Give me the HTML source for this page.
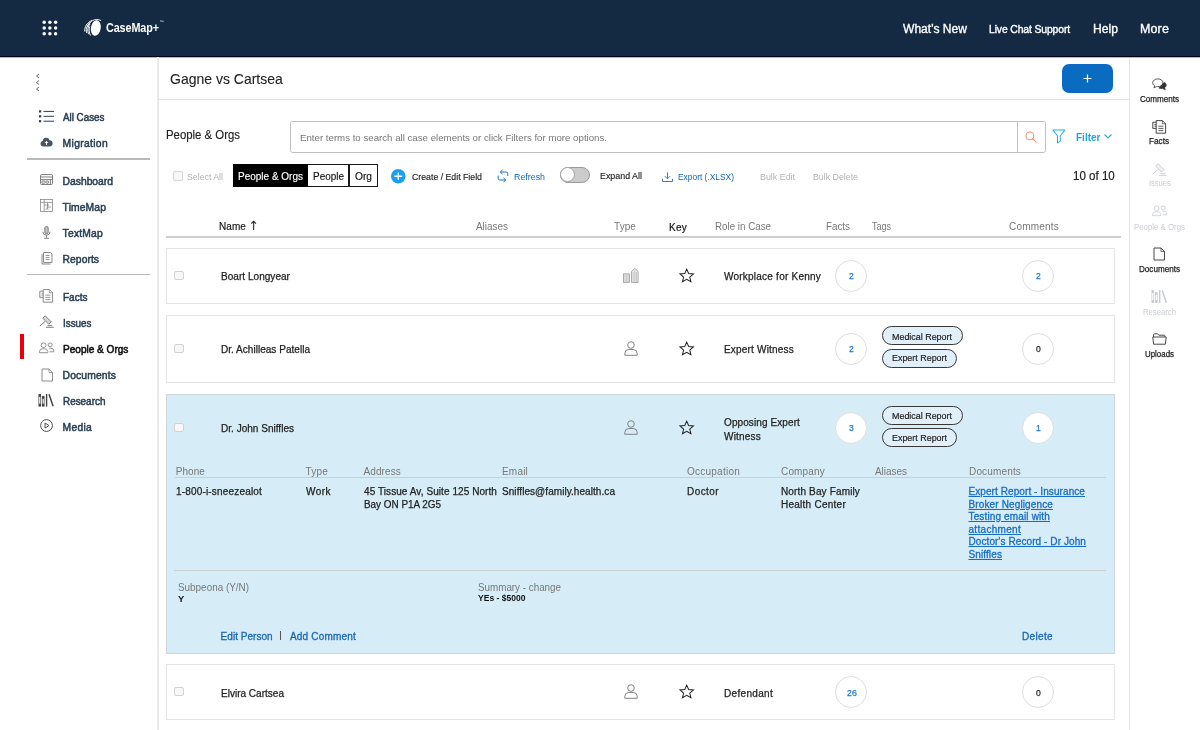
<!DOCTYPE html>
<html lang="en"><head><meta charset="utf-8"><title>CaseMap+ - People &amp; Orgs</title>
<style>
*{box-sizing:border-box;margin:0;padding:0}
html,body{width:1200px;height:730px;overflow:hidden;background:#fff}
body{font-family:"Liberation Sans",sans-serif;color:#222}
#app{position:relative;width:1200px;height:730px;overflow:hidden;will-change:transform}
.t{position:absolute;white-space:nowrap;display:block;transform-origin:0 50%}
.a{position:absolute;display:block}
.u{text-decoration:underline}
svg{position:absolute;overflow:visible}
.row{position:absolute;left:165.5px;width:949.3px;border:1.7px solid #e3e5e7;background:#fff}
.circ{position:absolute;width:32px;height:32px;border-radius:50%;border:1.4px solid #dedede;background:#fff}
.pill{position:absolute;height:18.5px;border:1.8px solid #383838;border-radius:10px;background:#e1effb}
.cb{position:absolute;width:9.5px;height:9.5px;border:1px solid #d2d2d2;border-radius:2px;background:#f7f7f7}
.hl{position:absolute;height:1px;background:#c9c9c9}

</style></head>
<body>
<div id="app">
<!-- top bar -->
<div class="a" style="left:0;top:0;width:1200px;height:55.7px;background:#142a43"></div>
<div class="a" style="left:0;top:55.6px;width:1200px;height:1.3px;background:#01031f"></div>
<div class="a" style="left:0;top:56.9px;width:1200px;height:1.3px;background:linear-gradient(rgba(50,66,96,.75),rgba(120,135,160,0))"></div>
<svg style="left:42px;top:20px" width="16" height="16" viewBox="0 0 16 16" fill="#fff"><circle cx="2.2" cy="2.3" r="1.75"/><circle cx="7.9" cy="2.3" r="1.75"/><circle cx="13.6" cy="2.3" r="1.75"/><circle cx="2.2" cy="8.0" r="1.75"/><circle cx="7.9" cy="8.0" r="1.75"/><circle cx="13.6" cy="8.0" r="1.75"/><circle cx="2.2" cy="13.7" r="1.75"/><circle cx="7.9" cy="13.7" r="1.75"/><circle cx="13.6" cy="13.7" r="1.75"/></svg>
<!-- logo -->
<svg style="left:83px;top:17px" width="20" height="20" viewBox="0 0 20 20">
<ellipse cx="12.8" cy="11" rx="4.9" ry="7.8" fill="#fff" transform="rotate(9 12.8 11)"/>
<g stroke="#fff" fill="none" stroke-linecap="round">
<path d="M4.6 9.6C5.6 4.2 12.5 0.6 17.8 3.4" stroke-width="0.9"/>
<path d="M8.6 3.6C4 5.6 1.2 9.8 1.8 14.2" stroke-width="1"/>
<path d="M7.6 5.2C4.2 7.6 2.6 11.4 3.6 15.6" stroke-width="1"/>
<path d="M6.8 7.2C4.6 9.8 4.2 13.4 5.4 16.8" stroke-width="1"/>
<path d="M6.6 9.8C5.6 12.4 6 15.6 7.4 18.2" stroke-width="1"/>
</g>
</svg>

<!-- left sidebar -->
<div class="a" style="left:157.3px;top:57px;width:1.7px;height:673px;background:#e8eaeb"></div>
<svg style="left:34.5px;top:73px" width="5" height="19" viewBox="0 0 5 19" fill="none" stroke="#444" stroke-width="0.8">
<path d="M4 1L1.5 3L4 5M4 7.5L1.5 9.5L4 11.5M4 14L1.5 16L4 18"/></svg>
<div class="a" style="left:27px;top:158.4px;width:123px;height:1.5px;background:#bababa"></div>
<div class="a" style="left:27px;top:273.6px;width:123px;height:1.5px;background:#bababa"></div>
<div class="a" style="left:20px;top:333.5px;width:3.5px;height:25px;background:#e8000d"></div>
<!-- sidebar icons -->
<svg style="left:39px;top:110px" width="15" height="13" viewBox="0 0 15 13" fill="#2d3e50">
<rect x="0" y="0.3" width="2.2" height="2.2"/><rect x="0" y="5.2" width="2.2" height="2.2"/><rect x="0" y="10.1" width="2.2" height="2.2"/>
<rect x="4.5" y="0.9" width="10.5" height="1"/><rect x="4.5" y="5.8" width="10.5" height="1"/><rect x="4.5" y="10.7" width="10.5" height="1"/></svg>
<svg style="left:40px;top:137px" width="13" height="10" viewBox="0 0 13 10">
<path d="M3 9.5A2.8 2.8 0 0 1 2.6 4A3.6 3.6 0 0 1 9.6 3.2A3.2 3.2 0 0 1 10.2 9.5Z" fill="#4a5560"/>
<path d="M6.5 8V4.6M4.9 6L6.5 4.4L8.1 6" stroke="#fff" stroke-width="1" fill="none"/></svg>
<!-- dashboard -->
<svg style="left:40px;top:174.3px" width="13" height="11" viewBox="0 0 13 11" fill="none" stroke="#6a6a6a" stroke-width="0.85">
<rect x="0.5" y="0.5" width="12" height="10" rx="1.2"/><path d="M0.5 3H12.5M0.5 5.6H12.5"/><rect x="1.8" y="7" width="3.2" height="2.2" rx="0.6"/><rect x="6" y="7" width="2.6" height="2.2" rx="0.6"/><path d="M10.4 5.6V10.5"/></svg>
<!-- timemap -->
<svg style="left:40px;top:199.4px" width="13" height="13" viewBox="0 0 13 13" fill="none" stroke="#808080" stroke-width="0.75">
<rect x="0.5" y="0.5" width="12" height="12"/><path d="M0.5 3.4H12.5M4.2 0.5V12.5M4.2 6H9M6.5 8H11M5.5 10H8.5M7.6 3.4V10"/></svg>
<!-- textmap (mic) -->
<svg style="left:42px;top:225.5px" width="9" height="13" viewBox="0 0 9 14" preserveAspectRatio="none" fill="none" stroke="#6f6f6f" stroke-width="0.9"><rect x="2.8" y="0.5" width="3.4" height="7.8" rx="1.7" fill="#c4c4c4"/><path d="M0.9 6.2A3.6 3.6 0 0 0 8.1 6.2M4.5 10V12.8M2 13.2H7"/></svg>
<!-- reports -->
<svg style="left:41px;top:251px" width="12" height="14" viewBox="0 0 12 14" fill="none" stroke="#7d7d7d" stroke-width="0.9">
<path d="M2.5 1.5H9.5L11 3V11.5H2.5Z"/><path d="M1 3V13H9.5"/><path d="M4.5 4.5H8.5M4.5 6.5H8.5M4.5 8.5H8.5" stroke-width="0.8"/></svg>
<!-- facts -->
<svg style="left:39px;top:289px" width="15" height="14" viewBox="0 0 15 14" fill="none" stroke="#7d7d7d" stroke-width="0.9">
<path d="M4.2 0.6H10.4L13.6 3.8V13.2H4.2Z"/><path d="M10.4 0.6V3.8H13.6" stroke-width="0.7"/><path d="M6.4 6.2H11.4M6.4 8.4H11.4M6.4 10.6H11.4" stroke-width="0.8"/><path d="M4.2 2.2H0.8V8.4H4.2" /><path d="M2.4 4.4H4.2M2.4 6.2H4.2" stroke-width="0.7"/></svg>
<!-- issues (gavel) -->
<svg style="left:39px;top:315px" width="15" height="13" viewBox="0 0 15 13" fill="none" stroke="#6f6f6f" stroke-width="0.9"><path d="M6.2 0.8L12.2 6.8L9.8 9.2L3.8 3.2Z" fill="#d8d8d8"/><path d="M6 6.4L0.8 11.2"/><path d="M7 12.3H14.6M8.4 10.6H13.2"/></svg>
<!-- people & orgs -->
<svg style="left:39px;top:342.4px" width="15.4" height="11.6" viewBox="0 0 16 13" preserveAspectRatio="none" fill="none" stroke="#7d7d7d" stroke-width="0.9">
<circle cx="4.8" cy="3.6" r="2.6"/><path d="M0.5 12V10.5A3.5 3.5 0 0 1 4 7.5H5.6A3.5 3.5 0 0 1 9.1 10.5V12Z"/><circle cx="11.6" cy="3.2" r="2.1"/><path d="M10.5 7H12.4A3 3 0 0 1 15.4 10V11H11"/></svg>
<!-- documents -->
<svg style="left:41px;top:368px" width="12" height="14" viewBox="0 0 12 14" fill="none" stroke="#7d7d7d" stroke-width="0.9">
<path d="M1 1H8L11.5 4.5V13H1Z"/><path d="M8 1V4.5H11.5" stroke-width="0.7"/></svg>
<!-- research (books) -->
<svg style="left:38.4px;top:393.6px" width="15.8" height="12.6" viewBox="0 0 16 13" preserveAspectRatio="none" fill="#444" stroke="none">
<rect x="0.5" y="0" width="2.6" height="13"/><rect x="4" y="2" width="2.6" height="11"/><rect x="8" y="0" width="1.4" height="13"/><path d="M10.5 0.6L11.9 0L16 12.4L14.6 13Z"/>
<rect x="1.2" y="3" width="1.2" height="7" fill="#fff"/><rect x="4.7" y="5" width="1.2" height="5" fill="#fff"/></svg>
<!-- media -->
<svg style="left:40.1px;top:419.4px" width="13.1" height="13.1" viewBox="0 0 14 14" fill="none" stroke="#444" stroke-width="1">
<circle cx="7" cy="7" r="6.3"/><path d="M5.4 4.3L9.6 7L5.4 9.7Z"/></svg>

<!-- right sidebar -->
<div class="a" style="left:1128.8px;top:58px;width:1.5px;height:672px;background:#e3e6e7"></div>
<!-- comments -->
<svg style="left:1152px;top:77.8px" width="15.3" height="13.5" viewBox="0 0 17 15" fill="none" stroke="#333" stroke-width="0.9">
<path d="M6.5 1C3.2 1 0.8 2.9 0.8 5.3C0.8 6.7 1.6 7.9 2.9 8.7L2.2 11L5 9.5C5.5 9.6 6 9.6 6.5 9.6C9.8 9.6 12.2 7.7 12.2 5.3S9.8 1 6.5 1Z"/>
<path d="M13.3 4.6C14.9 5.3 15.9 6.5 15.9 7.9C15.9 9 15.2 10 14.2 10.7L14.8 13.4L11.8 11.7C10.2 12 8.6 11.7 7.5 11" fill="#333" stroke-width="0.6"/></svg>
<!-- facts -->
<svg style="left:1152px;top:120px" width="15" height="14" viewBox="0 0 15 14" fill="none" stroke="#333" stroke-width="0.9">
<path d="M4.2 0.6H10.4L13.6 3.8V13.2H4.2Z"/><path d="M10.4 0.6V3.8H13.6" stroke-width="0.7"/><path d="M6.4 6.2H11.4M6.4 8.4H11.4M6.4 10.6H11.4" stroke-width="0.8"/><path d="M4.2 2.2H0.8V8.4H4.2" /><path d="M2.4 4.4H4.2M2.4 6.2H4.2" stroke-width="0.7"/></svg>
<!-- issues disabled -->
<svg style="left:1152px;top:163px" width="15" height="13" viewBox="0 0 15 13" fill="none" stroke="#c9cdd2" stroke-width="0.9"><path d="M6.2 0.8L12.2 6.8L9.8 9.2L3.8 3.2Z" fill="#eef0f2"/><path d="M6 6.4L0.8 11.2"/><path d="M7 12.3H14.6M8.4 10.6H13.2"/></svg>
<!-- people disabled -->
<svg style="left:1151.5px;top:205.4px" width="15.4" height="11.6" viewBox="0 0 16 13" preserveAspectRatio="none" fill="none" stroke="#c9cdd2" stroke-width="0.9">
<circle cx="4.8" cy="3.6" r="2.6"/><path d="M0.5 12V10.5A3.5 3.5 0 0 1 4 7.5H5.6A3.5 3.5 0 0 1 9.1 10.5V12Z"/><circle cx="11.6" cy="3.2" r="2.1"/><path d="M10.5 7H12.4A3 3 0 0 1 15.4 10V11H11"/></svg>
<!-- documents -->
<svg style="left:1153px;top:247px" width="12" height="14" viewBox="0 0 12 14" fill="none" stroke="#333" stroke-width="0.9">
<path d="M1 1H8L11.5 4.5V13H1Z"/><path d="M8 1V4.5H11.5" stroke-width="0.7"/></svg>
<!-- research disabled -->
<svg style="left:1151px;top:290px" width="16" height="13" viewBox="0 0 16 13" fill="#c9cdd2" stroke="none">
<rect x="0.5" y="0" width="2.6" height="13"/><rect x="4" y="2" width="2.6" height="11"/><rect x="8" y="0" width="1.4" height="13"/><path d="M10.5 0.6L11.9 0L16 12.4L14.6 13Z"/>
<rect x="1.2" y="3" width="1.2" height="7" fill="#fff"/><rect x="4.7" y="5" width="1.2" height="5" fill="#fff"/></svg>
<!-- uploads folder -->
<svg style="left:1152px;top:333px" width="15" height="12" viewBox="0 0 15 12" fill="none" stroke="#333" stroke-width="0.9">
<path d="M1.5 4V1.8A1 1 0 0 1 2.5 0.8H5.5L6.8 2.2H12A1 1 0 0 1 13 3.2V4"/><path d="M0.8 4H14.2L13.4 11.2H1.6Z"/></svg>

<!-- main header -->
<div class="a" style="left:158px;top:98.9px;width:971px;height:1.3px;background:#dde1ea"></div>
<div class="a" style="left:1062px;top:63.5px;width:51px;height:29.5px;background:#0a6cc0;border-radius:7px"></div>
<svg style="left:1083px;top:74px" width="9" height="9" viewBox="0 0 9 9" stroke="#fff" stroke-width="1.2"><path d="M4.5 0.5V8.5M0.5 4.5H8.5"/></svg>

<!-- search -->
<div class="a" style="left:290px;top:121.1px;width:755.8px;height:31.6px;border:1px solid #c0c0c0;border-radius:2.5px;background:#fff"></div>
<div class="a" style="left:1017px;top:121.1px;width:1px;height:31.6px;background:#c0c0c0"></div>
<svg style="left:1025px;top:130.6px" width="12.2" height="12.2" viewBox="0 0 13 13" fill="none" stroke="#f58a64" stroke-width="1.1"><circle cx="5.2" cy="5.2" r="4.2"/><path d="M8.3 8.3L12 12" stroke-linecap="round"/></svg>
<svg style="left:1052.2px;top:128.7px" width="13.8" height="15" viewBox="0 0 15 16" fill="none" stroke="#29abe2" stroke-width="1.1" stroke-linejoin="round"><path d="M1 1H14L9 7.5V13L6 15V7.5Z"/></svg>
<svg style="left:1104px;top:134px" width="8" height="5" viewBox="0 0 8 5" fill="none" stroke="#29abe2" stroke-width="1.1"><path d="M0.5 0.5L4 4L7.5 0.5"/></svg>

<!-- toolbar -->
<div class="cb" style="left:173px;top:171px;border-color:#d6d6d6"></div>
<div class="a" style="left:233px;top:164px;width:145px;height:23.2px;border:1px solid #1a1a1a;background:#fff"></div>
<div class="a" style="left:233px;top:164px;width:75px;height:23.2px;background:#000"></div>
<div class="a" style="left:348px;top:164px;width:1.5px;height:23.2px;background:#1a1a1a"></div>
<svg style="left:390.6px;top:169px" width="14.5" height="14.5" viewBox="0 0 15 15"><circle cx="7.5" cy="7.5" r="7.5" fill="#1c9ff0"/><path d="M7.5 3.5V11.5M3.5 7.5H11.5" stroke="#fff" stroke-width="1.3"/></svg>
<svg style="left:496.5px;top:169px" width="12" height="14" viewBox="0 0 12 14" fill="none" stroke="#1572c6" stroke-width="0.95"><path d="M10.8 7V4.6A1.6 1.6 0 0 0 9.2 3H3.4M5.6 0.8L3.2 3L5.6 5.2"/><path d="M1.2 6.6V9.4A1.6 1.6 0 0 0 2.8 11H8.6M6.4 8.8L8.8 11L6.4 13.2"/></svg>
<div class="a" style="left:560px;top:167px;width:29.5px;height:15.6px;border-radius:8px;background:#cbcbcb;border:1px solid #9a9a9a"></div>
<div class="a" style="left:560.3px;top:167.3px;width:15px;height:15px;border-radius:50%;background:#fff;border:1px solid #a0a0a0"></div>
<svg style="left:662px;top:172.4px" width="11" height="10" viewBox="0 0 11 10" fill="none" stroke="#1572c6" stroke-width="0.9"><path d="M5.5 0.3V6.6M2.9 4.2L5.5 6.8L8.1 4.2M0.5 6.8V9.5H10.5V6.8"/></svg>

<!-- table header line -->
<div class="a" style="left:165.8px;top:236px;width:955.7px;height:1.5px;background:#cfcecd"></div>

<!-- rows -->
<div class="row" style="top:248.3px;height:55.5px"></div>
<div class="row" style="top:314.7px;height:68.7px"></div>
<div class="row" style="top:393.7px;height:260.3px;background:#d6edf8;border-color:#cdd8dd"></div>
<div class="row" style="top:664.4px;height:55.9px"></div>
<div class="cb" style="left:174px;top:270.6px"></div>
<div class="cb" style="left:174px;top:343.6px"></div>
<div class="cb" style="left:174px;top:422.6px"></div>
<div class="cb" style="left:174px;top:686.6px"></div>

<!-- type icons -->
<svg style="left:623px;top:268px" width="16" height="15" viewBox="0 0 16 15" fill="#ececec" stroke="#8c8c8c" stroke-width="0.7">
<rect x="0.5" y="5.9" width="6.1" height="8.6"/><path d="M8.5 14.5V3.4L11.8 0.4L15.1 3.4V14.5Z"/><path d="M2.1 6.5V14M3.6 6.5V14M5.1 6.5V14M10.2 4V14M11.8 2.5V14M13.4 4V14" stroke-width="0.45" stroke="#9a9a9a"/></svg>
<svg style="left:624px;top:341px" width="14" height="15" viewBox="0 0 14 15" fill="none" stroke="#777" stroke-width="0.9"><circle cx="7" cy="4" r="3.3"/><path d="M0.8 14.3V12.5A4 4 0 0 1 4.8 8.5H9.2A4 4 0 0 1 13.2 12.5V14.3Z"/></svg>
<svg style="left:624px;top:420px" width="14" height="15" viewBox="0 0 14 15" fill="none" stroke="#777" stroke-width="0.9"><circle cx="7" cy="4" r="3.3"/><path d="M0.8 14.3V12.5A4 4 0 0 1 4.8 8.5H9.2A4 4 0 0 1 13.2 12.5V14.3Z"/></svg>
<svg style="left:624px;top:684px" width="14" height="15" viewBox="0 0 14 15" fill="none" stroke="#777" stroke-width="0.9"><circle cx="7" cy="4" r="3.3"/><path d="M0.8 14.3V12.5A4 4 0 0 1 4.8 8.5H9.2A4 4 0 0 1 13.2 12.5V14.3Z"/></svg>
<!-- stars -->
<svg style="left:679px;top:268.3px" width="15.4" height="14.4" viewBox="0 0 16 15" fill="none" stroke="#222" stroke-width="1.05"><path d="M8 1.2L10 5.8L15 6.2L11.2 9.5L12.4 14.3L8 11.7L3.6 14.3L4.8 9.5L1 6.2L6 5.8Z"/></svg>
<svg style="left:679px;top:341.3px" width="15.4" height="14.4" viewBox="0 0 16 15" fill="none" stroke="#222" stroke-width="1.05"><path d="M8 1.2L10 5.8L15 6.2L11.2 9.5L12.4 14.3L8 11.7L3.6 14.3L4.8 9.5L1 6.2L6 5.8Z"/></svg>
<svg style="left:679px;top:420.3px" width="15.4" height="14.4" viewBox="0 0 16 15" fill="none" stroke="#222" stroke-width="1.05"><path d="M8 1.2L10 5.8L15 6.2L11.2 9.5L12.4 14.3L8 11.7L3.6 14.3L4.8 9.5L1 6.2L6 5.8Z"/></svg>
<svg style="left:679px;top:684.3px" width="15.4" height="14.4" viewBox="0 0 16 15" fill="none" stroke="#222" stroke-width="1.05"><path d="M8 1.2L10 5.8L15 6.2L11.2 9.5L12.4 14.3L8 11.7L3.6 14.3L4.8 9.5L1 6.2L6 5.8Z"/></svg>
<!-- circles -->
<div class="circ" style="left:835.2px;top:260.0px"></div><div class="circ" style="left:1022.3px;top:260.0px"></div>
<div class="circ" style="left:835.2px;top:333.0px"></div><div class="circ" style="left:1022.3px;top:333.0px"></div>
<div class="circ" style="left:835.2px;top:412.0px"></div><div class="circ" style="left:1022.3px;top:412.0px"></div>
<div class="circ" style="left:835.2px;top:676.0px"></div><div class="circ" style="left:1022.3px;top:676.0px"></div>
<!-- pills -->
<div class="pill" style="left:882px;top:326.4px;width:81px;height:19px"></div>
<div class="pill" style="left:882px;top:349px;width:75px;height:18.8px"></div>
<div class="pill" style="left:882px;top:406px;width:81px"></div>
<div class="pill" style="left:882px;top:428.3px;width:75px;height:19px"></div>
<!-- expanded lines -->
<div class="hl" style="left:175px;top:477.3px;width:931px;height:1.2px;background:#c9cfd3"></div>
<div class="hl" style="left:173.5px;top:570.2px;width:932.5px;height:1.2px;background:#c9cfd3"></div>
<div class="a" style="left:280.3px;top:630.6px;width:1px;height:9.4px;background:#555"></div>

<span class="t" id="t0" style="left:105.6px;top:20.90px;font-size:12px;line-height:14.40px;font-weight:700;color:#fff;letter-spacing:-0.102px;transform:scaleX(0.9000);">CaseMap+</span>
<span class="t" id="t1" style="left:159.5px;top:20.20px;font-size:4px;line-height:4.80px;font-weight:400;color:#fff;">™</span>
<span class="t" id="t2" style="left:903px;top:22.10px;font-size:12.5px;line-height:15.00px;font-weight:400;color:#fff;transform:scaleX(0.9654);-webkit-text-stroke:0.35px;">What's New</span>
<span class="t" id="t3" style="left:989px;top:22.70px;font-size:11.5px;line-height:13.80px;font-weight:400;color:#fff;letter-spacing:-0.121px;transform:scaleX(0.9000);-webkit-text-stroke:0.4px;">Live Chat Support</span>
<span class="t" id="t4" style="left:1093px;top:22.10px;font-size:12.5px;line-height:15.00px;font-weight:400;color:#fff;transform:scaleX(0.9721);-webkit-text-stroke:0.35px;">Help</span>
<span class="t" id="t5" style="left:1140px;top:22.10px;font-size:12.5px;line-height:15.00px;font-weight:400;color:#fff;letter-spacing:0.129px;-webkit-text-stroke:0.35px;">More</span>
<span class="t" id="t6" style="left:62.6px;top:112.42px;font-size:10.3px;line-height:12.36px;font-weight:400;color:#293f53;transform:scaleX(0.9517);-webkit-text-stroke:0.5px;">All Cases</span>
<span class="t" id="t7" style="left:62.6px;top:138.42px;font-size:10.3px;line-height:12.36px;font-weight:400;color:#293f53;letter-spacing:0.338px;-webkit-text-stroke:0.5px;">Migration</span>
<span class="t" id="t8" style="left:62.6px;top:176.42px;font-size:10.3px;line-height:12.36px;font-weight:400;color:#293f53;-webkit-text-stroke:0.5px;">Dashboard</span>
<span class="t" id="t9" style="left:62.6px;top:202.42px;font-size:10.3px;line-height:12.36px;font-weight:400;color:#293f53;letter-spacing:0.124px;-webkit-text-stroke:0.5px;">TimeMap</span>
<span class="t" id="t10" style="left:62.6px;top:228.42px;font-size:10.3px;line-height:12.36px;font-weight:400;color:#293f53;letter-spacing:0.211px;-webkit-text-stroke:0.5px;">TextMap</span>
<span class="t" id="t11" style="left:62.6px;top:254.42px;font-size:10.3px;line-height:12.36px;font-weight:400;color:#293f53;letter-spacing:0.048px;-webkit-text-stroke:0.5px;">Reports</span>
<span class="t" id="t12" style="left:62.6px;top:292.42px;font-size:10.3px;line-height:12.36px;font-weight:400;color:#293f53;transform:scaleX(0.9687);-webkit-text-stroke:0.5px;">Facts</span>
<span class="t" id="t13" style="left:62.6px;top:318.42px;font-size:10.3px;line-height:12.36px;font-weight:400;color:#293f53;transform:scaleX(0.9541);-webkit-text-stroke:0.5px;">Issues</span>
<span class="t" id="t14" style="left:62.6px;top:344.42px;font-size:10.3px;line-height:12.36px;font-weight:400;color:#111;transform:scaleX(0.9766);-webkit-text-stroke:0.55px;">People &amp; Orgs</span>
<span class="t" id="t15" style="left:62.6px;top:370.42px;font-size:10.3px;line-height:12.36px;font-weight:400;color:#293f53;letter-spacing:0.147px;-webkit-text-stroke:0.5px;">Documents</span>
<span class="t" id="t16" style="left:62.6px;top:396.42px;font-size:10.3px;line-height:12.36px;font-weight:400;color:#293f53;transform:scaleX(0.9619);-webkit-text-stroke:0.5px;">Research</span>
<span class="t" id="t17" style="left:62.6px;top:422.42px;font-size:10.3px;line-height:12.36px;font-weight:400;color:#293f53;letter-spacing:0.271px;-webkit-text-stroke:0.5px;">Media</span>
<span class="t" id="t18" style="left:1140px;top:93.80px;font-size:8.5px;line-height:10.20px;font-weight:400;color:#222;transform:scaleX(0.9490);-webkit-text-stroke:0.25px;">Comments</span>
<span class="t" id="t19" style="left:1149px;top:136.40px;font-size:8.5px;line-height:10.20px;font-weight:400;color:#222;transform:scaleX(0.9624);-webkit-text-stroke:0.25px;">Facts</span>
<span class="t" id="t20" style="left:1148.6px;top:177.50px;font-size:8.5px;line-height:10.20px;font-weight:400;color:#c9cdd2;letter-spacing:-0.078px;transform:scaleX(0.9000);">Issues</span>
<span class="t" id="t21" style="left:1134px;top:221.80px;font-size:8.5px;line-height:10.20px;font-weight:400;color:#c9cdd2;transform:scaleX(0.9226);">People &amp; Orgs</span>
<span class="t" id="t22" style="left:1139px;top:263.50px;font-size:8.5px;line-height:10.20px;font-weight:400;color:#222;transform:scaleX(0.9535);-webkit-text-stroke:0.25px;">Documents</span>
<span class="t" id="t23" style="left:1143px;top:306.80px;font-size:8.5px;line-height:10.20px;font-weight:400;color:#c9cdd2;transform:scaleX(0.9068);">Research</span>
<span class="t" id="t24" style="left:1145px;top:349.10px;font-size:8.5px;line-height:10.20px;font-weight:400;color:#222;transform:scaleX(0.9299);-webkit-text-stroke:0.25px;">Uploads</span>
<span class="t" id="t25" style="left:170px;top:70.10px;font-size:15px;line-height:18.00px;font-weight:400;color:#222;transform:scaleX(0.9330);-webkit-text-stroke:0.1px;">Gagne vs Cartsea</span>
<span class="t" id="t26" style="left:166px;top:127.90px;font-size:12px;line-height:14.40px;font-weight:400;color:#222;transform:scaleX(0.9481);-webkit-text-stroke:0.15px;">People &amp; Orgs</span>
<span class="t" id="t27" style="left:300px;top:131.72px;font-size:9.8px;line-height:11.76px;font-weight:400;color:#777;transform:scaleX(0.9875);">Enter terms to search all case elements or click Filters for more options.</span>
<span class="t" id="t28" style="left:1075.5px;top:131.30px;font-size:10.5px;line-height:12.60px;font-weight:700;color:#1aa3e8;transform:scaleX(0.9544);">Filter</span>
<span class="t" id="t29" style="left:187px;top:172.08px;font-size:9.2px;line-height:11.04px;font-weight:400;color:#b0b0b0;transform:scaleX(0.9525);">Select All</span>
<span class="t" id="t30" style="left:238px;top:171.26px;font-size:10.4px;line-height:12.48px;font-weight:400;color:#fff;transform:scaleX(0.9618);-webkit-text-stroke:0.15px;">People &amp; Orgs</span>
<span class="t" id="t31" style="left:313px;top:171.26px;font-size:10.4px;line-height:12.48px;font-weight:400;color:#111;transform:scaleX(0.9580);-webkit-text-stroke:0.15px;">People</span>
<span class="t" id="t32" style="left:355px;top:171.26px;font-size:10.4px;line-height:12.48px;font-weight:400;color:#111;transform:scaleX(0.9811);-webkit-text-stroke:0.15px;">Org</span>
<span class="t" id="t33" style="left:412px;top:172.08px;font-size:9.2px;line-height:11.04px;font-weight:400;color:#222;transform:scaleX(0.9518);-webkit-text-stroke:0.15px;">Create / Edit Field</span>
<span class="t" id="t34" style="left:514px;top:172.08px;font-size:9.2px;line-height:11.04px;font-weight:400;color:#1167b8;transform:scaleX(0.9636);">Refresh</span>
<span class="t" id="t35" style="left:600px;top:170.58px;font-size:9.2px;line-height:11.04px;font-weight:400;color:#222;transform:scaleX(0.9673);-webkit-text-stroke:0.15px;">Expand All</span>
<span class="t" id="t36" style="left:678px;top:172.08px;font-size:9.2px;line-height:11.04px;font-weight:400;color:#1167b8;transform:scaleX(0.9138);">Export (.XLSX)</span>
<span class="t" id="t37" style="left:760px;top:172.08px;font-size:9.2px;line-height:11.04px;font-weight:400;color:#b2b2b2;transform:scaleX(0.9651);">Bulk Edit</span>
<span class="t" id="t38" style="left:813px;top:172.08px;font-size:9.2px;line-height:11.04px;font-weight:400;color:#b2b2b2;transform:scaleX(0.9578);">Bulk Delete</span>
<span class="t" id="t39" style="left:1072.6px;top:168.90px;font-size:12.5px;line-height:15.00px;font-weight:400;color:#222;transform:scaleX(0.9250);-webkit-text-stroke:0.2px;">10 of 10</span>
<span class="t" id="t40" style="left:219px;top:220.90px;font-size:10px;line-height:12.00px;font-weight:400;color:#222;letter-spacing:0.078px;-webkit-text-stroke:0.2px;">Name</span>
<span class="t" id="t41" style="left:248.2px;top:218.20px;font-size:12.5px;line-height:15.00px;font-weight:400;color:#222;font-family:'DejaVu Sans',sans-serif;">↑</span>
<span class="t" id="t42" style="left:476px;top:221.20px;font-size:10px;line-height:12.00px;font-weight:400;color:#777;transform:scaleX(0.9922);">Aliases</span>
<span class="t" id="t43" style="left:614px;top:221.20px;font-size:10px;line-height:12.00px;font-weight:400;color:#777;letter-spacing:0.078px;">Type</span>
<span class="t" id="t44" style="left:669px;top:222.00px;font-size:10px;line-height:12.00px;font-weight:400;color:#111;letter-spacing:0.255px;-webkit-text-stroke:0.2px;">Key</span>
<span class="t" id="t45" style="left:715px;top:221.20px;font-size:10px;line-height:12.00px;font-weight:400;color:#777;transform:scaleX(0.9779);">Role in Case</span>
<span class="t" id="t46" style="left:826px;top:221.20px;font-size:10px;line-height:12.00px;font-weight:400;color:#777;transform:scaleX(0.9815);">Facts</span>
<span class="t" id="t47" style="left:872px;top:221.20px;font-size:10px;line-height:12.00px;font-weight:400;color:#777;transform:scaleX(0.9000);">Tags</span>
<span class="t" id="t48" style="left:1009px;top:221.20px;font-size:10px;line-height:12.00px;font-weight:400;color:#777;letter-spacing:0.205px;">Comments</span>
<span class="t" id="t49" style="left:221px;top:270.60px;font-size:10px;line-height:12.00px;font-weight:400;color:#222;letter-spacing:0.044px;-webkit-text-stroke:0.25px;">Boart Longyear</span>
<span class="t" id="t50" style="left:724px;top:270.60px;font-size:10px;line-height:12.00px;font-weight:400;color:#222;letter-spacing:0.229px;-webkit-text-stroke:0.25px;">Workplace for Kenny</span>
<span class="t" id="t51" style="left:848.7px;top:271.20px;font-size:9px;line-height:10.80px;font-weight:400;color:#1b75d0;transform:scaleX(0.9570);-webkit-text-stroke:0.25px;">2</span>
<span class="t" id="t52" style="left:1035.7px;top:271.20px;font-size:9px;line-height:10.80px;font-weight:400;color:#1b75d0;transform:scaleX(0.9570);-webkit-text-stroke:0.25px;">2</span>
<span class="t" id="t53" style="left:221px;top:343.60px;font-size:10px;line-height:12.00px;font-weight:400;color:#222;letter-spacing:0.029px;-webkit-text-stroke:0.25px;">Dr. Achilleas Patella</span>
<span class="t" id="t54" style="left:724px;top:343.60px;font-size:10px;line-height:12.00px;font-weight:400;color:#222;letter-spacing:0.196px;-webkit-text-stroke:0.25px;">Expert Witness</span>
<span class="t" id="t55" style="left:848.7px;top:344.20px;font-size:9px;line-height:10.80px;font-weight:400;color:#1b75d0;transform:scaleX(0.9570);-webkit-text-stroke:0.25px;">2</span>
<span class="t" id="t56" style="left:1035.7px;top:344.20px;font-size:9px;line-height:10.80px;font-weight:400;color:#222;transform:scaleX(0.9570);-webkit-text-stroke:0.25px;">0</span>
<span class="t" id="t57" style="left:892px;top:330.80px;font-size:9.5px;line-height:11.40px;font-weight:400;color:#222;transform:scaleX(0.9391);-webkit-text-stroke:0.2px;">Medical Report</span>
<span class="t" id="t58" style="left:892px;top:351.90px;font-size:9.5px;line-height:11.40px;font-weight:400;color:#222;transform:scaleX(0.9382);-webkit-text-stroke:0.2px;">Expert Report</span>
<span class="t" id="t59" style="left:221px;top:422.60px;font-size:10px;line-height:12.00px;font-weight:400;color:#222;letter-spacing:0.021px;-webkit-text-stroke:0.25px;">Dr. John Sniffles</span>
<span class="t" id="t60" style="left:724px;top:416.60px;font-size:10px;line-height:12.00px;font-weight:400;color:#222;letter-spacing:0.100px;-webkit-text-stroke:0.25px;">Opposing Expert</span>
<span class="t" id="t61" style="left:724px;top:430.60px;font-size:10px;line-height:12.00px;font-weight:400;color:#222;letter-spacing:0.205px;-webkit-text-stroke:0.25px;">Witness</span>
<span class="t" id="t62" style="left:848.7px;top:423.20px;font-size:9px;line-height:10.80px;font-weight:400;color:#1b75d0;transform:scaleX(0.9570);-webkit-text-stroke:0.25px;">3</span>
<span class="t" id="t63" style="left:1035.7px;top:423.20px;font-size:9px;line-height:10.80px;font-weight:400;color:#1b75d0;transform:scaleX(0.9570);-webkit-text-stroke:0.25px;">1</span>
<span class="t" id="t64" style="left:892px;top:410.40px;font-size:9.5px;line-height:11.40px;font-weight:400;color:#222;transform:scaleX(0.9391);-webkit-text-stroke:0.2px;">Medical Report</span>
<span class="t" id="t65" style="left:892px;top:432.40px;font-size:9.5px;line-height:11.40px;font-weight:400;color:#222;transform:scaleX(0.9382);-webkit-text-stroke:0.2px;">Expert Report</span>
<span class="t" id="t66" style="left:175.7px;top:465.60px;font-size:10px;line-height:12.00px;font-weight:400;color:#777;letter-spacing:0.076px;">Phone</span>
<span class="t" id="t67" style="left:305.5px;top:465.60px;font-size:10px;line-height:12.00px;font-weight:400;color:#777;letter-spacing:0.203px;">Type</span>
<span class="t" id="t68" style="left:363.4px;top:465.60px;font-size:10px;line-height:12.00px;font-weight:400;color:#777;letter-spacing:0.130px;">Address</span>
<span class="t" id="t69" style="left:502px;top:465.60px;font-size:10px;line-height:12.00px;font-weight:400;color:#777;letter-spacing:0.197px;">Email</span>
<span class="t" id="t70" style="left:687px;top:465.60px;font-size:10px;line-height:12.00px;font-weight:400;color:#777;letter-spacing:0.241px;">Occupation</span>
<span class="t" id="t71" style="left:781px;top:465.60px;font-size:10px;line-height:12.00px;font-weight:400;color:#777;letter-spacing:0.170px;">Company</span>
<span class="t" id="t72" style="left:875px;top:465.60px;font-size:10px;line-height:12.00px;font-weight:400;color:#777;transform:scaleX(0.9922);">Aliases</span>
<span class="t" id="t73" style="left:969px;top:465.60px;font-size:10px;line-height:12.00px;font-weight:400;color:#777;letter-spacing:0.158px;">Documents</span>
<span class="t" id="t74" style="left:176px;top:486.30px;font-size:10px;line-height:12.00px;font-weight:400;color:#222;letter-spacing:0.176px;-webkit-text-stroke:0.25px;">1-800-i-sneezealot</span>
<span class="t" id="t75" style="left:306px;top:486.30px;font-size:10px;line-height:12.00px;font-weight:400;color:#222;letter-spacing:0.461px;-webkit-text-stroke:0.25px;">Work</span>
<span class="t" id="t76" style="left:364px;top:486.30px;font-size:10px;line-height:12.00px;font-weight:400;color:#222;letter-spacing:0.075px;-webkit-text-stroke:0.25px;">45 Tissue Av, Suite 125 North</span>
<span class="t" id="t77" style="left:364px;top:498.60px;font-size:10px;line-height:12.00px;font-weight:400;color:#222;transform:scaleX(0.9894);-webkit-text-stroke:0.25px;">Bay ON P1A 2G5</span>
<span class="t" id="t78" style="left:502px;top:486.30px;font-size:10px;line-height:12.00px;font-weight:400;color:#222;letter-spacing:0.060px;-webkit-text-stroke:0.25px;">Sniffles@family.health.ca</span>
<span class="t" id="t79" style="left:687px;top:486.30px;font-size:10px;line-height:12.00px;font-weight:400;color:#222;letter-spacing:0.424px;-webkit-text-stroke:0.25px;">Doctor</span>
<span class="t" id="t80" style="left:781px;top:486.30px;font-size:10px;line-height:12.00px;font-weight:400;color:#222;letter-spacing:0.145px;-webkit-text-stroke:0.25px;">North Bay Family</span>
<span class="t" id="t81" style="left:781px;top:498.60px;font-size:10px;line-height:12.00px;font-weight:400;color:#222;letter-spacing:0.254px;-webkit-text-stroke:0.25px;">Health Center</span>
<span class="t" id="t82" style="left:968.5px;top:486.00px;font-size:10px;line-height:12.00px;font-weight:400;color:#176dc4;letter-spacing:0.080px;text-decoration:underline;-webkit-text-stroke:0.3px;">Expert Report - Insurance</span>
<span class="t" id="t83" style="left:968.5px;top:498.50px;font-size:10px;line-height:12.00px;font-weight:400;color:#176dc4;letter-spacing:0.131px;text-decoration:underline;-webkit-text-stroke:0.3px;">Broker Negligence</span>
<span class="t" id="t84" style="left:968.5px;top:511.00px;font-size:10px;line-height:12.00px;font-weight:400;color:#176dc4;letter-spacing:0.143px;text-decoration:underline;-webkit-text-stroke:0.3px;">Testing email with</span>
<span class="t" id="t85" style="left:968.5px;top:523.50px;font-size:10px;line-height:12.00px;font-weight:400;color:#176dc4;letter-spacing:0.302px;text-decoration:underline;-webkit-text-stroke:0.3px;">attachment</span>
<span class="t" id="t86" style="left:968.5px;top:536.00px;font-size:10px;line-height:12.00px;font-weight:400;color:#176dc4;letter-spacing:0.089px;text-decoration:underline;-webkit-text-stroke:0.3px;">Doctor's Record - Dr John</span>
<span class="t" id="t87" style="left:968.5px;top:548.50px;font-size:10px;line-height:12.00px;font-weight:400;color:#176dc4;letter-spacing:0.109px;text-decoration:underline;-webkit-text-stroke:0.3px;">Sniffles</span>
<span class="t" id="t88" style="left:178px;top:581.60px;font-size:10px;line-height:12.00px;font-weight:400;color:#777;transform:scaleX(0.9900);">Subpeona (Y/N)</span>
<span class="t" id="t89" style="left:178.2px;top:593.30px;font-size:9.5px;line-height:11.40px;font-weight:700;color:#111;transform:scaleX(0.9773);">Y</span>
<span class="t" id="t90" style="left:478px;top:581.60px;font-size:10px;line-height:12.00px;font-weight:400;color:#777;transform:scaleX(0.9824);">Summary - change</span>
<span class="t" id="t91" style="left:478px;top:593.40px;font-size:9px;line-height:10.80px;font-weight:700;color:#111;transform:scaleX(0.9491);">YEs - $5000</span>
<span class="t" id="t92" style="left:220.6px;top:631.30px;font-size:10px;line-height:12.00px;font-weight:400;color:#1a66b3;letter-spacing:0.027px;-webkit-text-stroke:0.3px;">Edit Person</span>
<span class="t" id="t93" style="left:290px;top:631.30px;font-size:10px;line-height:12.00px;font-weight:400;color:#1a66b3;letter-spacing:0.189px;-webkit-text-stroke:0.3px;">Add Comment</span>
<span class="t" id="t94" style="left:1022px;top:631.00px;font-size:10px;line-height:12.00px;font-weight:400;color:#1a66b3;letter-spacing:0.349px;-webkit-text-stroke:0.3px;">Delete</span>
<span class="t" id="t95" style="left:221px;top:688.20px;font-size:10px;line-height:12.00px;font-weight:400;color:#222;letter-spacing:0.013px;-webkit-text-stroke:0.25px;">Elvira Cartsea</span>
<span class="t" id="t96" style="left:724px;top:688.20px;font-size:10px;line-height:12.00px;font-weight:400;color:#222;letter-spacing:0.316px;-webkit-text-stroke:0.25px;">Defendant</span>
<span class="t" id="t97" style="left:846.7px;top:687.70px;font-size:9px;line-height:10.80px;font-weight:400;color:#1b75d0;transform:scaleX(0.9785);-webkit-text-stroke:0.25px;">26</span>
<span class="t" id="t98" style="left:1035.7px;top:687.70px;font-size:9px;line-height:10.80px;font-weight:400;color:#222;transform:scaleX(0.9570);-webkit-text-stroke:0.25px;">0</span>
</div>
</body></html>
